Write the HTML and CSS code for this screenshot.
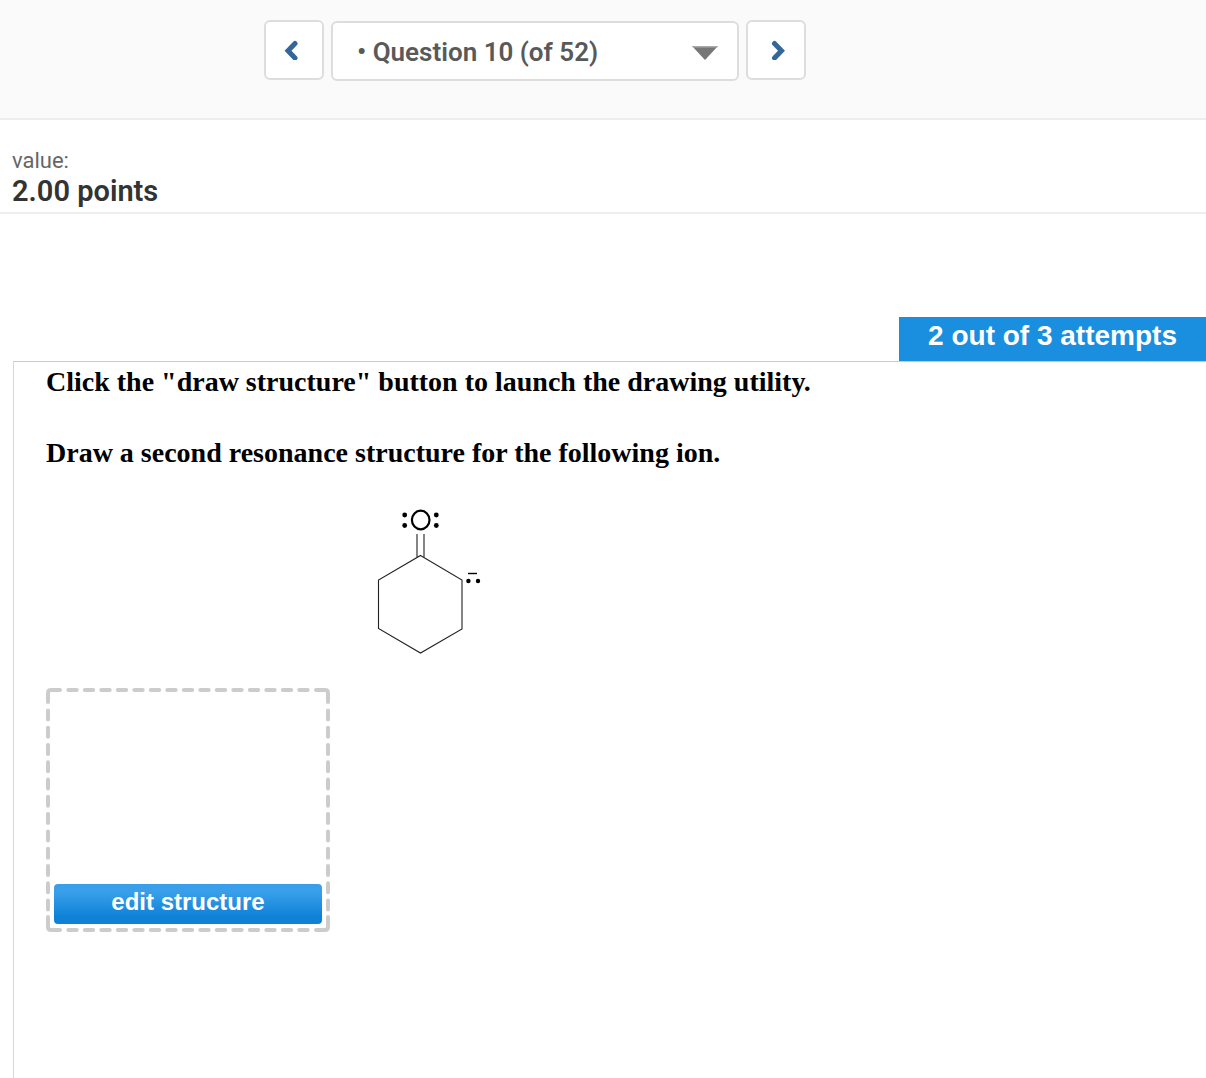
FILE: index.html
```html
<!DOCTYPE html>
<html lang="en">
<head>
    <meta charset="UTF-8">
    <meta name="viewport" content="width=device-width, initial-scale=1.0">
    <title>Question 10</title>
    <link rel="stylesheet" href="styles.css">
</head>
<body>

    <!-- Question navigation -->
    <header class="question-nav">
        <button class="nav-button" aria-label="Previous question">
            <svg width="14" height="20" viewBox="0 0 14 20"><path d="M11 3.5 L4 10.7 L11 18" /></svg>
        </button>
        <div class="question-picker">
            <select aria-label="Question">
                <option>• Question 10 (of 52)</option>
            </select>
            <svg class="arrow" width="26" height="14" viewBox="0 0 26 14">
                <path d="M0 0H26L13 14Z" fill="#777" />
                <path d="M0 0H26L25 1.5H1Z" fill="#aaa" />
            </svg>
        </div>
        <button class="nav-button" aria-label="Next question">
            <svg width="14" height="20" viewBox="0 0 14 20"><path d="M3.5 3.5 L10.5 10.7 L3.5 18" /></svg>
        </button>
    </header>

    <!-- Points -->
    <div class="points">
        <div class="points-label">value:</div>
        <div class="points-value">2.00 points</div>
    </div>

    <div class="attempts">2 out of 3 attempts</div>

    <!-- Question -->
    <main class="question">
        <p>Click the "draw structure" button to launch the drawing utility.</p>
        <p>Draw a second resonance structure for the following ion.</p>

        <svg class="molecule" width="120" height="160" viewBox="370 500 120 160" role="img" aria-label="Cyclohexanone enolate ion">
            <g fill="none" stroke="#222" stroke-width="1.1">
                <path d="M420.5 555.5L462 580V629L420.5 653L378.5 628.5V580Z" />
                <path d="M417 534V557M424 534V557" />
                <path d="M468 573.5H477" stroke="#000" stroke-width="1.4" />
            </g>
            <ellipse cx="420.7" cy="520" rx="8.8" ry="9.3" fill="none" stroke="#000" stroke-width="2.2" />
            <g fill="#000">
                <circle cx="404.7" cy="515" r="2.4" />
                <circle cx="404.7" cy="525.5" r="2.4" />
                <circle cx="436.3" cy="515" r="2.4" />
                <circle cx="436.3" cy="525.5" r="2.4" />
                <circle cx="468.4" cy="581" r="2.2" />
                <circle cx="478" cy="581" r="2.2" />
            </g>
        </svg>

        <div class="structure-box">
            <svg class="dashes" width="284" height="244" viewBox="0 0 284 244">
                <g fill="none" stroke="#ccc" stroke-width="4" stroke-linecap="round">
                    <path d="M14 2H5Q2 2 2 5V14M270 2H279Q282 2 282 5V14M14 242H5Q2 242 2 239V229M270 242H279Q282 242 282 239V229" />
                    <path d="M22.3 2H262M22.3 242H262" stroke-dasharray="8.4 8.1" />
                    <path d="M2 22.5V222M282 22.5V222" stroke-dasharray="9 8.27" />
                </g>
            </svg>
            <button class="edit-button">edit structure</button>
        </div>
    </main>

</body>
</html>
```

FILE: styles.css
```css
* {
    box-sizing: border-box;
}

body {
    margin: 0;
    min-height: 100vh;
    display: flex;
    flex-direction: column;
    background-color: #fff;
    font-family: "Roboto", sans-serif;
}

/* Question navigation */
.question-nav {
    display: flex;
    gap: 7px;
    height: 120px;
    padding: 20px 20px 0 264px;
    background-color: #fafafa;
    border-bottom: 2px solid #eee;
}

.nav-button {
    display: flex;
    align-items: center;
    justify-content: center;
    width: 60px;
    height: 60px;
    padding: 0 6px 0 0;
    background-color: #fff;
    border: 2px solid #ddd;
    border-radius: 6px;
    cursor: pointer;
}

.nav-button:last-child {
    padding: 0 0 0 4px;
}

.nav-button path {
    fill: none;
    stroke: #336699;
    stroke-width: 5;
    stroke-linecap: round;
}

.question-picker {
    position: relative;
    flex: 0 1 408px;
    margin-top: 1px;
}

.question-picker select {
    appearance: none;
    width: 100%;
    height: 60px;
    padding: 2px 60px 0 24px;
    background-color: #fff;
    border: 2px solid #ddd;
    border-radius: 6px;
    color: #595959;
    font-family: inherit;
    font-size: 26px;
    font-weight: 600;
}

.question-picker .arrow {
    position: absolute;
    top: 25px;
    right: 21px;
    pointer-events: none;
}

/* Points */
.points {
    padding: 28px 12px 4px;
    border-bottom: 2px solid #eee;
}

.points-label {
    color: #666;
    font-size: 22px;
    line-height: 26px;
}

.points-value {
    color: #333;
    font-size: 29px;
    font-weight: 600;
    line-height: 34px;
}

/* Attempts */
.attempts {
    align-self: flex-end;
    height: 44px;
    margin-top: 103px;
    padding: 0 29px;
    background-color: #1a8fe0;
    color: #fff;
    font-family: "Liberation Sans", sans-serif;
    font-size: 28px;
    font-weight: bold;
    line-height: 38px;
}

/* Question */
.question {
    flex: 1;
    margin-left: 13px;
    padding: 0 32px;
    border-top: 1px solid #c4cccc;
    border-left: 1px solid #d4dada;
    color: #000;
    font-family: "Liberation Serif", serif;
    font-size: 28px;
    font-weight: bold;
}

.question p {
    margin: 4px 0 39px;
    line-height: 32px;
}

.molecule {
    display: block;
    margin: -8px 0 28px 324px;
}

.structure-box {
    position: relative;
    display: flex;
    align-items: flex-end;
    width: 284px;
    height: 244px;
    padding: 8px;
}

.dashes {
    position: absolute;
    top: 0;
    left: 0;
}

.edit-button {
    position: relative;
    width: 100%;
    height: 40px;
    padding: 0 0 4px;
    background: linear-gradient(#3a9fea 20%, #0f82d8 80%);
    border: none;
    border-radius: 4px;
    color: #fff;
    font-family: "Liberation Sans", sans-serif;
    font-size: 24px;
    font-weight: bold;
    cursor: pointer;
}
```
